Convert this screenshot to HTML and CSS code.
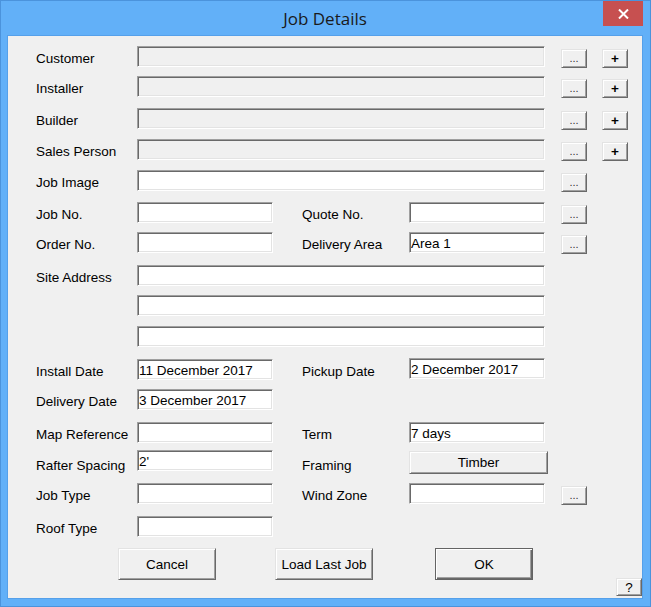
FILE: index.html
```html
<!DOCTYPE html>
<html>

<head>
    <meta charset="utf-8" />
    <title>Job Details</title>
    <link rel="stylesheet" href="styles.css">
</head>

<body>
    <div class="window">
        <div class="titlebar">
            <span class="title">Job Details</span>
            <button class="close">
                <svg width="11" height="10" viewBox="0 0 11 10">
                    <path d="M1 0.5 L10 9.5 M10 0.5 L1 9.5" stroke="#fff" stroke-width="2" fill="none" />
                </svg>
            </button>
        </div>
        <div class="client">
            <div class="form">
                <label class="lbl">Customer</label>
                <input class="field wide off" type="text" value="" />
                <button class="btn dots">...</button>
                <button class="btn plus">+</button>

                <label class="lbl">Installer</label>
                <input class="field wide off" type="text" value="" />
                <button class="btn dots">...</button>
                <button class="btn plus">+</button>

                <label class="lbl">Builder</label>
                <input class="field wide off" type="text" value="" />
                <button class="btn dots">...</button>
                <button class="btn plus">+</button>

                <label class="lbl">Sales Person</label>
                <input class="field wide off" type="text" value="" />
                <button class="btn dots">...</button>
                <button class="btn plus">+</button>

                <label class="lbl">Job Image</label>
                <input class="field wide" type="text" value="" />
                <button class="btn dots">...</button>

                <label class="lbl">Job No.</label>
                <input class="field short" type="text" value="" />
                <label class="lbl right">Quote No.</label>
                <input class="field short2" type="text" value="" />
                <button class="btn dots">...</button>

                <label class="lbl">Order No.</label>
                <input class="field short" type="text" value="" />
                <label class="lbl right">Delivery Area</label>
                <input class="field short2" type="text" value="Area 1" />
                <button class="btn dots">...</button>

                <label class="lbl">Site Address</label>
                <input class="field wide" type="text" value="" />
                <input class="field wide" type="text" value="" />
                <input class="field wide" type="text" value="" />

                <label class="lbl">Install Date</label>
                <input class="field short" type="text" value="11 December 2017" />
                <label class="lbl right">Pickup Date</label>
                <input class="field short2 up" type="text" value="2 December 2017" />

                <label class="lbl">Delivery Date</label>
                <input class="field short" type="text" value="3 December 2017" />

                <label class="lbl">Map Reference</label>
                <input class="field short" type="text" value="" />
                <label class="lbl right">Term</label>
                <input class="field short2" type="text" value="7 days" />

                <label class="lbl low">Rafter Spacing</label>
                <input class="field short" type="text" value="2'" />
                <label class="lbl right low">Framing</label>
                <button class="btn framing">Timber</button>

                <label class="lbl">Job Type</label>
                <input class="field short" type="text" value="" />
                <label class="lbl right">Wind Zone</label>
                <input class="field short2" type="text" value="" />
                <button class="btn dots">...</button>

                <label class="lbl">Roof Type</label>
                <input class="field short" type="text" value="" />
            </div>
            <div class="footer">
                <button class="btn big">Cancel</button>
                <button class="btn big">Load Last Job</button>
                <button class="btn big default">OK</button>
                <button class="btn help">?</button>
            </div>
        </div>
    </div>
</body>

</html>
```

FILE: styles.css
```css
body {
    margin: 0;
    padding: 0;
}

.window {
    width: 651px;
    height: 607px;
    box-sizing: border-box;
    border: 1px solid #4b93dc;
    background: #62b0f8;
    padding: 0 7px 7px 6px;
    font-family: "Liberation Sans", Arial, sans-serif;
    font-size: 13.5px;
    color: #000;
}

.titlebar {
    position: relative;
    height: 34px;
    text-align: center;
}

.title {
    display: inline-block;
    padding-top: 7px;
    line-height: 22px;
    font-family: "Open Sans", "Noto Sans", sans-serif;
    font-size: 17px;
    color: #1a1a1a;
}

.close {
    position: absolute;
    top: 0;
    right: 0;
    width: 40px;
    height: 25px;
    border: none;
    padding: 0;
    background: #c75050;
    display: flex;
    align-items: center;
    justify-content: center;
}

.client {
    height: 562px;
    border: 1px solid #55a0ea;
    background: #f0f0f0;
}

/* form grid */
.form {
    display: grid;
    grid-template-columns: 101px 136px 136px 136px 16px 26px 15px 26px;
    grid-template-rows: 30px 32px 31px 31px 32px 30px 33px 30px 31px 33px 30px 33px 28px 33px 33px 32px;
    padding: 10px 0 0 28px;
}

.lbl {
    grid-column: 1;
    padding-top: 5px;
    line-height: 16px;
    white-space: nowrap;
}

.lbl.right {
    grid-column: 3;
    padding-left: 29px;
}

.lbl.low {
    padding-top: 8px;
}

.field {
    align-self: start;
    box-sizing: border-box;
    height: 21px;
    width: 100%;
    margin: 0;
    padding: 2px 1px 0;
    border: 1px solid;
    border-color: #a0a0a0 #fff #fff #a0a0a0;
    box-shadow: inset 1px 1px 0 #696969, inset -1px -1px 0 #e3e3e3;
    background: #fff;
    font-family: inherit;
    font-size: 13.5px;
    color: #000;
    outline: none;
}

.wide {
    grid-column: 2 / 5;
}

.short {
    grid-column: 2;
}

.short2 {
    grid-column: 4;
}

.up {
    margin-top: -1px;
}

.off {
    background: #f0f0f0;
}

/* buttons */
.btn {
    box-sizing: border-box;
    margin: 0;
    padding: 0;
    border: 1px solid;
    border-color: #e3e3e3 #696969 #696969 #e3e3e3;
    box-shadow: inset 1px 1px 0 #fff, inset -1px -1px 0 #a0a0a0;
    background: #f0f0f0;
    font-family: inherit;
    font-size: 13.5px;
    color: #000;
}

.dots {
    grid-column: 6;
    align-self: start;
    width: 26px;
    height: 19px;
    margin-top: 3px;
    font-size: 11px;
    line-height: 17px;
    color: #333;
}

.plus {
    grid-column: 8;
    align-self: start;
    width: 26px;
    height: 19px;
    margin-top: 3px;
    font-weight: bold;
    line-height: 16px;
}

.framing {
    grid-column: 4 / 6;
    align-self: start;
    width: 139px;
    height: 23px;
    margin-top: 1px;
}

.footer {
    display: flex;
    height: 50px;
    padding-left: 110px;
}

.big {
    width: 98px;
    height: 32px;
    margin-right: 59px;
}

.big.default {
    margin-left: 3px;
    border-color: #646464;
    box-shadow: inset 1px 1px 0 #fff, inset -1px -1px 0 #696969, inset -2px -2px 0 #a0a0a0;
}

.help {
    align-self: flex-end;
    margin-left: auto;
    margin-bottom: 2px;
    width: 26px;
    height: 18px;
}
```
